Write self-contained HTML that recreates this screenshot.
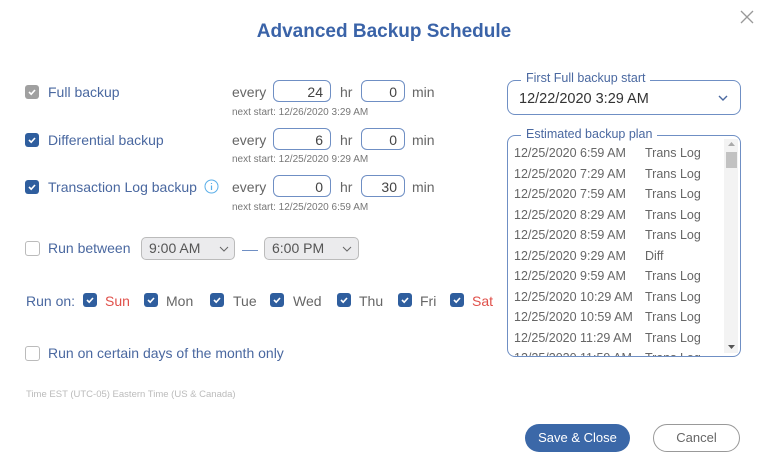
<!DOCTYPE html>
<html><head><style>
body{margin:0;width:768px;height:466px;background:#fff;font-family:"Liberation Sans",sans-serif;position:relative;overflow:hidden}
.a{position:absolute;white-space:nowrap}
.t{color:#4a68a0;font-size:14px}
.g{color:#666;font-size:14px}
.cb{position:absolute;width:14px;height:14px;border-radius:3px;background:#2f5e9e}
.cb svg{position:absolute;left:2px;top:2px}
.cb.off{background:#fff;border:1px solid #bbb;width:13px;height:13px}
.cb.gr{background:#a0a0a0}
.in{position:absolute;border:1px solid #6f8fc4;border-radius:6px;height:22px;box-sizing:border-box;text-align:right;padding-right:7px;font-size:14px;color:#444;line-height:22px}
.ns{position:absolute;font-size:10px;color:#777;white-space:nowrap}
.sel{position:absolute;border:1px solid #bbb;background:#ebebed;border-radius:5px;height:23px;box-sizing:border-box;font-size:14px;color:#555;line-height:21px;padding-left:7px}
.fs{position:absolute;border:1px solid #6f8fc4;border-radius:8px;box-sizing:border-box}
.lg{position:absolute;background:#fff;padding:0 5px;color:#4a68a0;font-size:12.5px;white-space:nowrap}
.r{position:absolute;left:514px;font-size:12.5px;color:#666;white-space:nowrap;width:200px}
.r span{position:absolute;left:131px;top:0}
</style></head><body>
<div class="a" style="left:0;width:768px;text-align:center;top:21px;font-size:19px;font-weight:bold;color:#3a63a8">Advanced Backup Schedule</div>
<svg class="a" style="left:740px;top:10px" width="14" height="14"><path d="M1 1L13 13M13 1L1 13" stroke="#999" stroke-width="1.3"/></svg>

<div class="cb gr" style="left:25px;top:85px"><svg width="10" height="10"><path d="M2 5L4.2 7.2L8 3" stroke="#fff" stroke-width="1.6" fill="none"/></svg></div>
<div class="a t" style="left:48px;top:84px">Full backup</div>
<div class="cb" style="left:25px;top:133px"><svg width="10" height="10"><path d="M2 5L4.2 7.2L8 3" stroke="#fff" stroke-width="1.6" fill="none"/></svg></div>
<div class="a t" style="left:48px;top:132px">Differential backup</div>
<div class="cb" style="left:25px;top:180px"><svg width="10" height="10"><path d="M2 5L4.2 7.2L8 3" stroke="#fff" stroke-width="1.6" fill="none"/></svg></div>
<div class="a t" style="left:48px;top:179px">Transaction Log backup</div>
<svg class="a" style="left:204px;top:179px" width="15" height="15"><circle cx="7.5" cy="7.5" r="6.5" fill="none" stroke="#5aaee8" stroke-width="1"/><path d="M7.5 6.5V11M7.5 4V5" stroke="#5aaee8" stroke-width="1.2"/></svg>

<div class="a g" style="left:232px;top:84px">every</div><div class="in" style="left:273px;top:80px;width:58px">24</div><div class="a g" style="left:340px;top:84px">hr</div><div class="in" style="left:361px;top:80px;width:44px">0</div><div class="a g" style="left:412px;top:84px">min</div>
<div class="ns" style="left:232px;top:107px">next start: 12/26/2020 3:29 AM</div>
<div class="a g" style="left:232px;top:132px">every</div><div class="in" style="left:273px;top:128px;width:58px">6</div><div class="a g" style="left:340px;top:132px">hr</div><div class="in" style="left:361px;top:128px;width:44px">0</div><div class="a g" style="left:412px;top:132px">min</div>
<div class="ns" style="left:232px;top:154px">next start: 12/25/2020 9:29 AM</div>
<div class="a g" style="left:232px;top:179px">every</div><div class="in" style="left:273px;top:175px;width:58px">0</div><div class="a g" style="left:340px;top:179px">hr</div><div class="in" style="left:361px;top:175px;width:44px">30</div><div class="a g" style="left:412px;top:179px">min</div>
<div class="ns" style="left:232px;top:202px">next start: 12/25/2020 6:59 AM</div>

<div class="cb off" style="left:25px;top:241px"></div>
<div class="a t" style="left:48px;top:240px">Run between</div>
<div class="sel" style="left:141px;top:237px;width:94px">9:00 AM<svg class="a" style="left:77px;top:8px" width="10" height="6"><path d="M1 1L5 5L9 1" stroke="#666" fill="none"/></svg></div>
<div class="a" style="left:242px;top:250px;width:16px;border-top:1px solid #6f8fc4"></div>
<div class="sel" style="left:264px;top:237px;width:95px">6:00 PM<svg class="a" style="left:77px;top:8px" width="10" height="6"><path d="M1 1L5 5L9 1" stroke="#666" fill="none"/></svg></div>

<div class="a t" style="left:26px;top:293px">Run on:</div>
<div class="cb" style="left:83px;top:293px"><svg width="10" height="10"><path d="M2 5L4.2 7.2L8 3" stroke="#fff" stroke-width="1.6" fill="none"/></svg></div><div class="a" style="left:105px;top:293px;font-size:14px;color:#e0504a">Sun</div>
<div class="cb" style="left:144px;top:293px"><svg width="10" height="10"><path d="M2 5L4.2 7.2L8 3" stroke="#fff" stroke-width="1.6" fill="none"/></svg></div><div class="a g" style="left:166px;top:293px">Mon</div>
<div class="cb" style="left:210px;top:293px"><svg width="10" height="10"><path d="M2 5L4.2 7.2L8 3" stroke="#fff" stroke-width="1.6" fill="none"/></svg></div><div class="a g" style="left:233px;top:293px">Tue</div>
<div class="cb" style="left:270px;top:293px"><svg width="10" height="10"><path d="M2 5L4.2 7.2L8 3" stroke="#fff" stroke-width="1.6" fill="none"/></svg></div><div class="a g" style="left:293px;top:293px">Wed</div>
<div class="cb" style="left:337px;top:293px"><svg width="10" height="10"><path d="M2 5L4.2 7.2L8 3" stroke="#fff" stroke-width="1.6" fill="none"/></svg></div><div class="a g" style="left:359px;top:293px">Thu</div>
<div class="cb" style="left:398px;top:293px"><svg width="10" height="10"><path d="M2 5L4.2 7.2L8 3" stroke="#fff" stroke-width="1.6" fill="none"/></svg></div><div class="a g" style="left:420px;top:293px">Fri</div>
<div class="cb" style="left:450px;top:293px"><svg width="10" height="10"><path d="M2 5L4.2 7.2L8 3" stroke="#fff" stroke-width="1.6" fill="none"/></svg></div><div class="a" style="left:472px;top:293px;font-size:14px;color:#e0504a">Sat</div>

<div class="cb off" style="left:25px;top:346px"></div>
<div class="a t" style="left:48px;top:345px">Run on certain days of the month only</div>
<div class="a" style="left:26px;top:389px;font-size:9.5px;color:#bbb">Time EST (UTC-05) Eastern Time (US &amp; Canada)</div>

<div class="fs" style="left:507px;top:80px;width:234px;height:35px"></div>
<div class="lg" style="left:521px;top:71px">First Full backup start</div>
<div class="a" style="left:519px;top:91px;font-size:14.5px;color:#333">12/22/2020 3:29 AM</div>
<svg class="a" style="left:718px;top:95px" width="10" height="6"><path d="M1 1L5 5L9 1" stroke="#4a68a0" stroke-width="1.4" fill="none"/></svg>

<div class="fs" style="left:507px;top:135px;width:234px;height:222px;overflow:hidden">
<div style="position:absolute;left:216px;top:3px;width:14px;height:214px;background:#f3f3f3"></div>
<div style="position:absolute;left:218px;top:16px;width:11px;height:16px;background:#c2c2c2"></div>
<svg style="position:absolute;left:220px;top:6px" width="7" height="5"><path d="M0 4L3.5 0L7 4Z" fill="#aaa"/></svg>
<svg style="position:absolute;left:220px;top:209px" width="7" height="5"><path d="M0 0L3.5 4L7 0Z" fill="#555"/></svg>
</div>
<div class="lg" style="left:521px;top:127px">Estimated backup plan</div>
<div class="r" style="top:146px">12/25/2020 6:59 AM<span>Trans Log</span></div>
<div class="r" style="top:166.5px">12/25/2020 7:29 AM<span>Trans Log</span></div>
<div class="r" style="top:187px">12/25/2020 7:59 AM<span>Trans Log</span></div>
<div class="r" style="top:207.5px">12/25/2020 8:29 AM<span>Trans Log</span></div>
<div class="r" style="top:228px">12/25/2020 8:59 AM<span>Trans Log</span></div>
<div class="r" style="top:248.5px">12/25/2020 9:29 AM<span>Diff</span></div>
<div class="r" style="top:269px">12/25/2020 9:59 AM<span>Trans Log</span></div>
<div class="r" style="top:289.5px">12/25/2020 10:29 AM<span>Trans Log</span></div>
<div class="r" style="top:310px">12/25/2020 10:59 AM<span>Trans Log</span></div>
<div class="r" style="top:330.5px">12/25/2020 11:29 AM<span>Trans Log</span></div>
<div class="r" style="top:351px;height:5px;overflow:hidden">12/25/2020 11:59 AM<span>Trans Log</span></div>

<div class="a" style="left:525px;top:424px;width:105px;height:28px;border-radius:14px;background:#3b68a8;color:#fff;font-size:13px;text-align:center;line-height:28px">Save &amp; Close</div>
<div class="a" style="left:653px;top:424px;width:87px;height:28px;box-sizing:border-box;border:1px solid #999;border-radius:14px;color:#666;font-size:13px;text-align:center;line-height:26px">Cancel</div>
</body></html>
